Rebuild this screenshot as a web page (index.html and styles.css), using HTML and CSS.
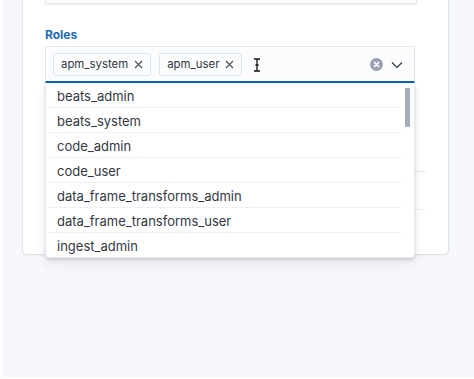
FILE: index.html
```html
<!DOCTYPE html>
<html>
<head>
<meta charset="utf-8">
<link rel="stylesheet" href="styles.css">
</head>
<body>
<div class="page">
  <div class="card">
    <div class="prev-input"></div>
    <div class="row">
      <div class="label">Roles</div>
      <div class="combo-wrap">
        <div class="combo">
          <div class="pills">
            <span class="pill">apm_system<svg class="pill-x" width="9" height="9" viewBox="0 0 9 9"><path d="M1 1l7 7M8 1l-7 7" stroke="#4a4e57" stroke-width="1.1"/></svg></span>
            <span class="pill">apm_user<svg class="pill-x" width="9" height="9" viewBox="0 0 9 9"><path d="M1 1l7 7M8 1l-7 7" stroke="#4a4e57" stroke-width="1.1"/></svg></span>
            <svg class="ibeam" width="8" height="14" viewBox="0 0 8 14"><path d="M1 1h2.2c.5 0 .8.3.8.8M7 1H4.8c-.5 0-.8.3-.8.8V12.2c0 .5-.3.8-.8.8H1M7 13H4.8c-.5 0-.8-.3-.8-.8M2.4 7h3.2" fill="none" stroke="#111" stroke-width="1.3"/></svg>
          </div>
          <div class="icons">
            <svg class="clear" width="13" height="13" viewBox="0 0 13 13"><circle cx="6.5" cy="6.5" r="6.5" fill="#98a1b3"/><path d="M4.5 4.5l4 4M8.5 4.5l-4 4" stroke="#fff" stroke-width="1.7" stroke-linecap="round"/></svg>
            <svg class="chev" width="12" height="8" viewBox="0 0 12 8"><path d="M1 1.5l5 5 5-5" fill="none" stroke="#343741" stroke-width="1.2"/></svg>
          </div>
        </div>
        <div class="dropdown">
          <div class="list">
            <div class="opt">beats_admin</div>
            <div class="opt">beats_system</div>
            <div class="opt">code_admin</div>
            <div class="opt">code_user</div>
            <div class="opt">data_frame_transforms_admin</div>
            <div class="opt">data_frame_transforms_user</div>
            <div class="opt last">ingest_admin</div>
          </div>
          <div class="scroll"><div class="thumb"></div></div>
        </div>
      </div>
    </div>
    <div class="spacer"></div>
    <hr class="rule">
    <div class="footer"><div class="btn"></div></div>
  </div>
</div>
</body>
</html>
```

FILE: styles.css
```css
html, body {
  margin: 0;
  padding: 0;
  background: #ffffff;
}
body {
  width: 474px;
  height: 379px;
  overflow: hidden;
  font-family: Inter, "Liberation Sans", sans-serif;
}
.page {
  margin-left: 2px;
  height: 377px;
  background: #f7f8fc;
  overflow: hidden;
}
.card {
  margin-left: 20px;
  margin-top: -30px;
  width: 381px;
  height: 263px;
  padding: 0 22px 20px 22px;
  background: #ffffff;
  border: 1px solid #dfe3ea;
  border-radius: 5px;
  box-shadow: 0 1px 2px rgba(0,0,0,0.05);
}
.prev-input {
  width: 370px;
  height: 32px;
  background: #fbfcfd;
  border: 1px solid #e6e9ef;
  border-top: none;
  box-shadow: 0 1px 1px rgba(0,0,0,0.06);
}
.row {
  margin-top: 24px;
}
.label {
  font-size: 12px;
  font-weight: 700;
  color: #1a6bb5;
  line-height: 14px;
  height: 14px;
}
.combo-wrap {
  position: relative;
  margin-top: 4px;
  width: 370px;
}
.combo {
  box-sizing: border-box;
  height: 37px;
  background: #fbfcfd;
  border: 1px solid #e3e7ee;
  border-bottom: 2px solid #0b64ad;
  display: flex;
  align-items: center;
  justify-content: space-between;
  padding: 0 11px 0 7px;
}
.pills {
  display: flex;
  align-items: center;
  gap: 8px;
}
.pill {
  box-sizing: border-box;
  height: 23px;
  display: inline-flex;
  align-items: center;
  padding: 0 7px 0 7px;
  background: #fbfcfd;
  border: 1px solid #dde2ea;
  border-radius: 3px;
  font-size: 11.4px;
  color: #343741;
}
.pill-x {
  margin-left: 6px;
}
.ibeam {
  margin-left: 3px;
  margin-top: 2px;
}
.icons {
  display: flex;
  align-items: center;
  gap: 8px;
}
.chev {
  margin-top: 1px;
}
.dropdown {
  position: absolute;
  top: 100%;
  left: 0;
  width: 370px;
  height: 175px;
  background: #ffffff;
  border-radius: 0 0 4px 4px;
  box-shadow: 0 2px 3px rgba(0,0,0,0.12), 0 6px 12px rgba(30,40,70,0.08);
  border: 1px solid #e7eaf0;
  border-top: none;
  box-sizing: border-box;
  display: flex;
  overflow: hidden;
}
.list {
  flex: 1;
  padding-left: 2px;
}
.opt {
  height: 25px;
  box-sizing: border-box;
  border-bottom: 1px solid #eef0f4;
  padding-left: 9px;
  padding-top: 2px;
  font-size: 13px;
  line-height: 22px;
  color: #343741;
}
.opt.last {
  border-bottom: none;
}
.scroll {
  width: 13px;
  display: flex;
  justify-content: center;
}
.thumb {
  margin-top: 5px;
  width: 5px;
  height: 39px;
  border-radius: 1px;
  background: #a7aebb;
}
.spacer {
  height: 88px;
}
.rule {
  margin: 0;
  border: none;
  border-top: 1px solid #e6e9ef;
}
.footer {
  margin-top: 37px;
  display: flex;
  justify-content: flex-end;
}
.btn {
  width: 100px;
  height: 1px;
  background: #eef0f4;
}
```
